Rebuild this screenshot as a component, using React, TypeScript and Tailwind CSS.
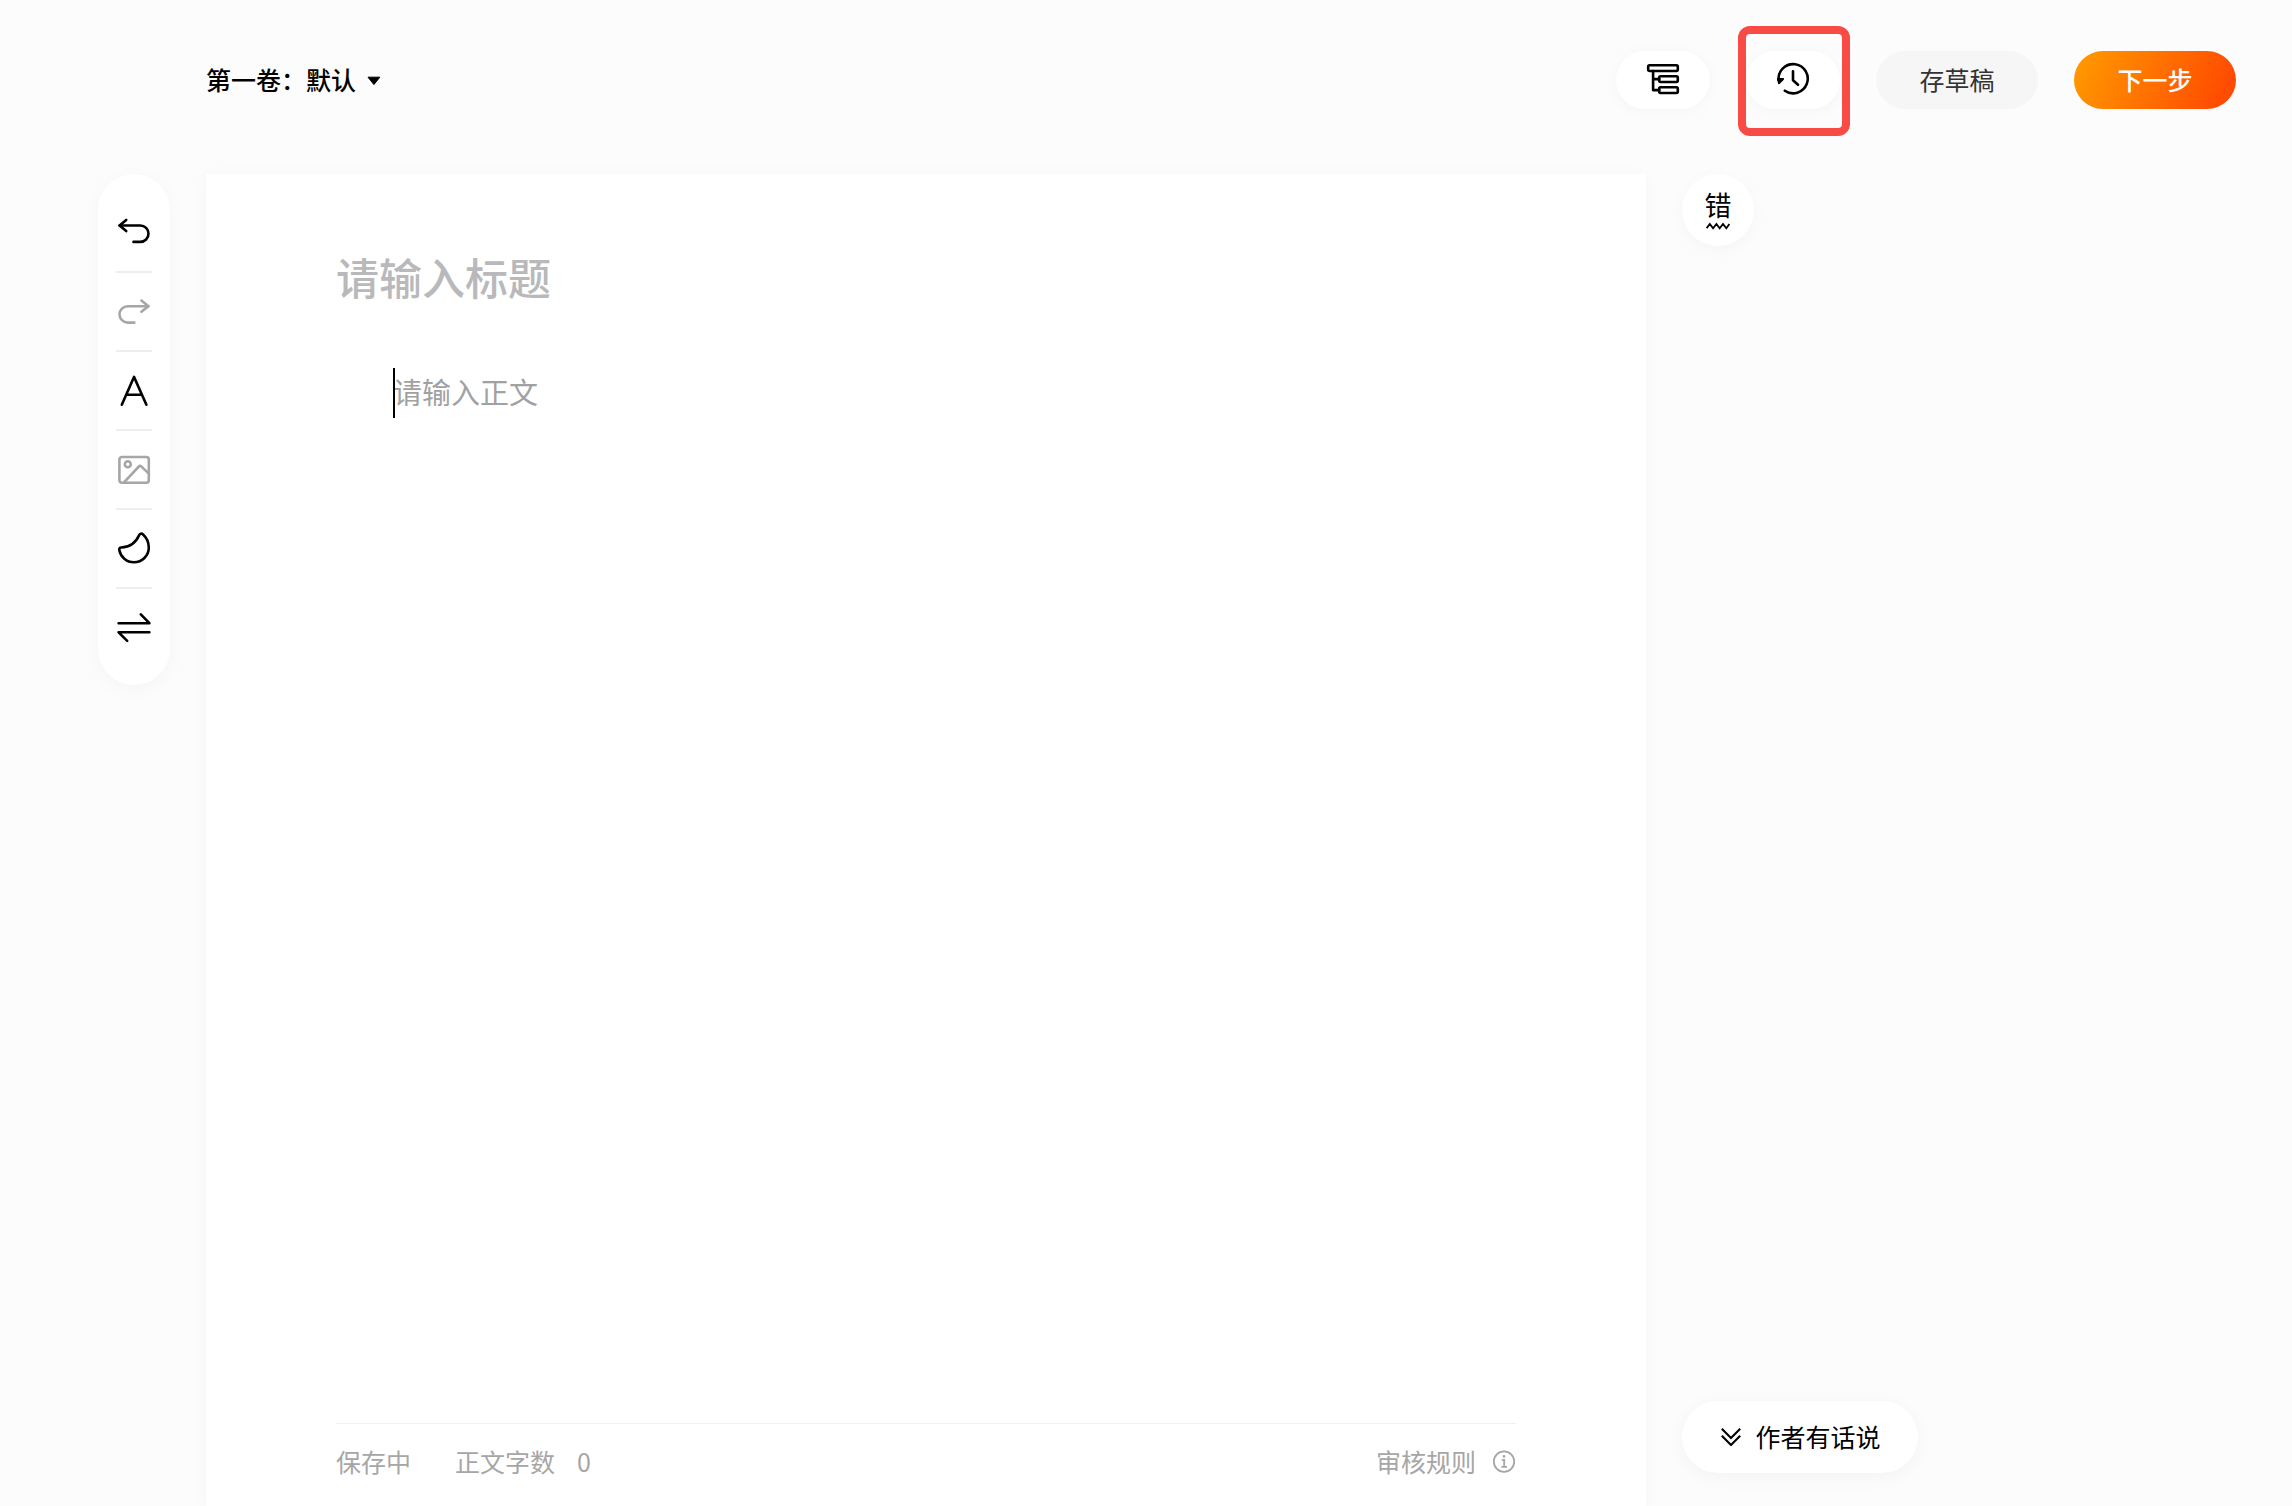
import type { ReactNode } from "react";

function Icon({ children, className = "" }: { children: ReactNode; className?: string }) {
  return (
    <svg
      viewBox="0 0 32 32"
      className={`h-8 w-8 shrink-0 overflow-visible ${className}`}
      fill="none"
      stroke="currentColor"
      strokeWidth="2.6"
      strokeLinecap="round"
      strokeLinejoin="round"
      aria-hidden="true"
    >
      {children}
    </svg>
  );
}

const tools: { label: string; disabled?: boolean; icon: ReactNode }[] = [
  {
    label: "撤销",
    icon: (
      <>
        <path d="M1.6 8.5H22.3a8.2 8.2 0 0 1 0 16.4H15.5" />
        <path d="M8.2 2.9L1.6 8.5L8.2 14.1" />
      </>
    ),
  },
  {
    label: "重做",
    disabled: true,
    icon: (
      <>
        <path d="M30.4 10.2H9.7a8.2 8.2 0 0 0 0 16.4H16.3" />
        <path d="M23.4 4.6L30.4 10.2L23.4 15.8" />
      </>
    ),
  },
  { label: "字体", icon: <path d="M3.8 29.7L16 1.9L28.4 29.7M8.6 19.8H23.8" /> },
  {
    label: "插入图片",
    disabled: true,
    icon: (
      <>
        <rect x="1.4" y="3" width="29.4" height="25.7" rx="2.5" />
        <circle cx="9.8" cy="10.2" r="3" />
        <path d="M6 28.4L20.9 12.5Q22 11.3 23.2 12.4L30.6 19.4" />
      </>
    ),
  },
  {
    label: "夜间模式",
    icon: (
      <path d="M21.2 2C18.2 9 12.6 14.2 3.2 14.5C1.8 14.6 1 15.6 1.3 17C2.6 24 8.5 29.3 15.9 29.3C24.1 29.3 30.8 22.8 30.8 14.6C30.8 9 28.6 4.6 24.8 1.2C23.5 .1 21.8 .6 21.2 2Z" />
    ),
  },
  {
    label: "查找替换",
    icon: (
      <>
        <path d="M.6 11.2H31.4L22.8 2.4" />
        <path d="M31.4 20.3H.6L9.2 28.9" />
      </>
    ),
  },
];

function Header() {
  return (
    <header className="flex h-40 items-center justify-between pr-14 pl-[206px]">
      <div className="flex items-center">
        <select
          aria-label="分卷"
          className="cursor-pointer appearance-none bg-transparent pb-0.5 text-[25px] leading-9 font-medium text-black outline-none"
        >
          <option>第一卷：默认</option>
        </select>
        <svg viewBox="0 0 14 10" className="pointer-events-none mt-0.5 ml-2.5 h-2.5 w-3.5" aria-hidden="true">
          <path d="M1 1.2H12.8L6.9 8.6Z" fill="#000" stroke="#000" strokeWidth="1" strokeLinejoin="round" />
        </svg>
      </div>

      <div className="flex items-center gap-9">
        <button
          type="button"
          aria-label="大纲"
          className="flex h-[58px] w-[94px] items-center justify-center rounded-full bg-white shadow-[0_2px_16px_rgba(0,0,0,0.03)]"
        >
          <Icon>
            <rect x="1.2" y="1.2" width="29.6" height="5.8" rx="1.4" />
            <rect x="12.2" y="12.2" width="18.6" height="5.8" rx="1.4" />
            <rect x="12.2" y="23.2" width="18.6" height="5.8" rx="1.4" />
            <path d="M6.1 7V26.1H12.2M6.1 15.1H12.2" />
          </Icon>
        </button>

        <div className="relative">
          <button
            type="button"
            aria-label="历史记录"
            className="flex h-[58px] w-[94px] items-center justify-center rounded-full bg-white shadow-[0_2px_16px_rgba(0,0,0,0.03)]"
          >
            <Icon>
              <path d="M1.6 16A14.6 14.6 0 1 1 7.8 26.7" />
              <path d="M.9 15L6.2 15L1.9 19.4Z" fill="currentColor" strokeWidth="1.8" />
              <path d="M16 7.2V16.2L21 20.8" />
            </Icon>
          </button>
          <div className="pointer-events-none absolute -top-[25px] -left-2 h-[110px] w-28 rounded-xl border-8 border-[#f84b46]" />
        </div>

        <button
          type="button"
          className="flex h-[58px] w-[162px] items-center justify-center rounded-full bg-[#f6f6f6] pb-0.5 text-[25px] leading-9 text-[#333]"
        >
          存草稿
        </button>
        <button
          type="button"
          className="flex h-[58px] w-[162px] items-center justify-center rounded-full bg-[linear-gradient(115deg,#ff9500_8%,#ff4a00_92%)] pb-0.5 text-[25px] leading-9 font-medium text-white"
        >
          下一步
        </button>
      </div>
    </header>
  );
}

function Toolbar() {
  return (
    <nav
      aria-label="工具栏"
      className="flex w-[72px] shrink-0 flex-col items-center self-start rounded-full bg-white pt-5 pb-[19px] shadow-[0_4px_20px_rgba(0,0,0,0.03)]"
    >
      {tools.map((tool, i) => (
        <div key={tool.label} className="flex flex-col items-center">
          {i > 0 && <div className="h-0.5 w-9 bg-[#eeeeee]" />}
          <button
            type="button"
            aria-label={tool.label}
            disabled={tool.disabled}
            className="flex h-[77px] w-[72px] items-center justify-center text-black disabled:text-[#a6a6a6]"
          >
            <Icon>{tool.icon}</Icon>
          </button>
        </div>
      ))}
    </nav>
  );
}

function Editor() {
  return (
    <main className="flex min-w-0 flex-1 flex-col bg-white px-[130px] pt-[70px] shadow-[0_2px_16px_rgba(0,0,0,0.03)]">
      <input
        type="text"
        aria-label="标题"
        placeholder="请输入标题"
        className="h-16 w-full bg-transparent text-[43px] leading-[64px] font-medium text-black outline-none placeholder:text-[#b9b9bb]"
      />
      <div className="relative mt-[60px] flex flex-1 pl-[57px]">
        <div className="pointer-events-none absolute top-0 left-[57px] h-[50px] w-0.5 bg-black" />
        <textarea
          aria-label="正文"
          placeholder="请输入正文"
          className="w-full resize-none bg-transparent text-[29px] leading-[46px] text-black caret-transparent outline-none placeholder:text-[#a1a1a1]"
        />
      </div>
      <footer className="flex items-center justify-between border-t border-[#efefef] pt-[22px] pb-[30px] text-[25px] leading-[30px] text-[#a6a6a6]">
        <div className="flex items-center">
          <span>保存中</span>
          <span className="ml-11">正文字数</span>
          <span className="ml-[22px]">0</span>
        </div>
        <a href="#rules" className="flex items-center gap-4">
          审核规则
          <svg
            viewBox="0 0 24 24"
            className="h-6 w-6"
            fill="none"
            stroke="currentColor"
            strokeWidth="1.8"
            aria-hidden="true"
          >
            <circle cx="12" cy="12.6" r="10.2" />
            <path d="M9.8 10.8H12.2V17.8M9.4 17.8H15" />
            <circle cx="12" cy="7.4" r="1.3" fill="currentColor" stroke="none" />
          </svg>
        </a>
      </footer>
    </main>
  );
}

function SidePanel() {
  return (
    <aside className="flex w-[610px] shrink-0 flex-col items-start justify-between pb-[33px]">
      <button
        type="button"
        aria-label="纠错"
        className="flex h-[72px] w-[72px] flex-col items-center justify-center gap-[3px] rounded-full bg-white shadow-[0_4px_16px_rgba(0,0,0,0.03)]"
      >
        <span className="text-[27px] leading-7 text-black">错</span>
        <svg
          viewBox="0 0 24 8"
          className="h-2 w-6"
          fill="none"
          stroke="#000"
          strokeWidth="1.8"
          aria-hidden="true"
        >
          <path d="M.6 6.2L3.8 2L7.1 6.2L10.4 2L13.7 6.2L17 2L20.3 6.2L23.4 2" />
        </svg>
      </button>
      <button
        type="button"
        className="flex h-[72px] w-[236px] items-center justify-center gap-3.5 rounded-full bg-white pb-0.5 pl-0.5 text-[25px] leading-9 text-black shadow-[0_4px_20px_rgba(0,0,0,0.04)]"
      >
        <svg
          viewBox="0 0 20 20"
          className="h-5 w-5"
          fill="none"
          stroke="currentColor"
          strokeWidth="2.1"
          aria-hidden="true"
        >
          <path d="M.8 2.8L10 12L19.2 2.8M.8 9.8L10 19L19.2 9.8" />
        </svg>
        作者有话说
      </button>
    </aside>
  );
}

export default function App() {
  return (
    <div
      lang="zh-CN"
      className="flex min-h-screen flex-col bg-[#fcfcfc] font-['Noto_Sans_CJK_SC',sans-serif]"
    >
      <Header />
      <div className="flex flex-1 gap-9 pt-3.5 pl-[98px]">
        <Toolbar />
        <Editor />
        <SidePanel />
      </div>
    </div>
  );
}
